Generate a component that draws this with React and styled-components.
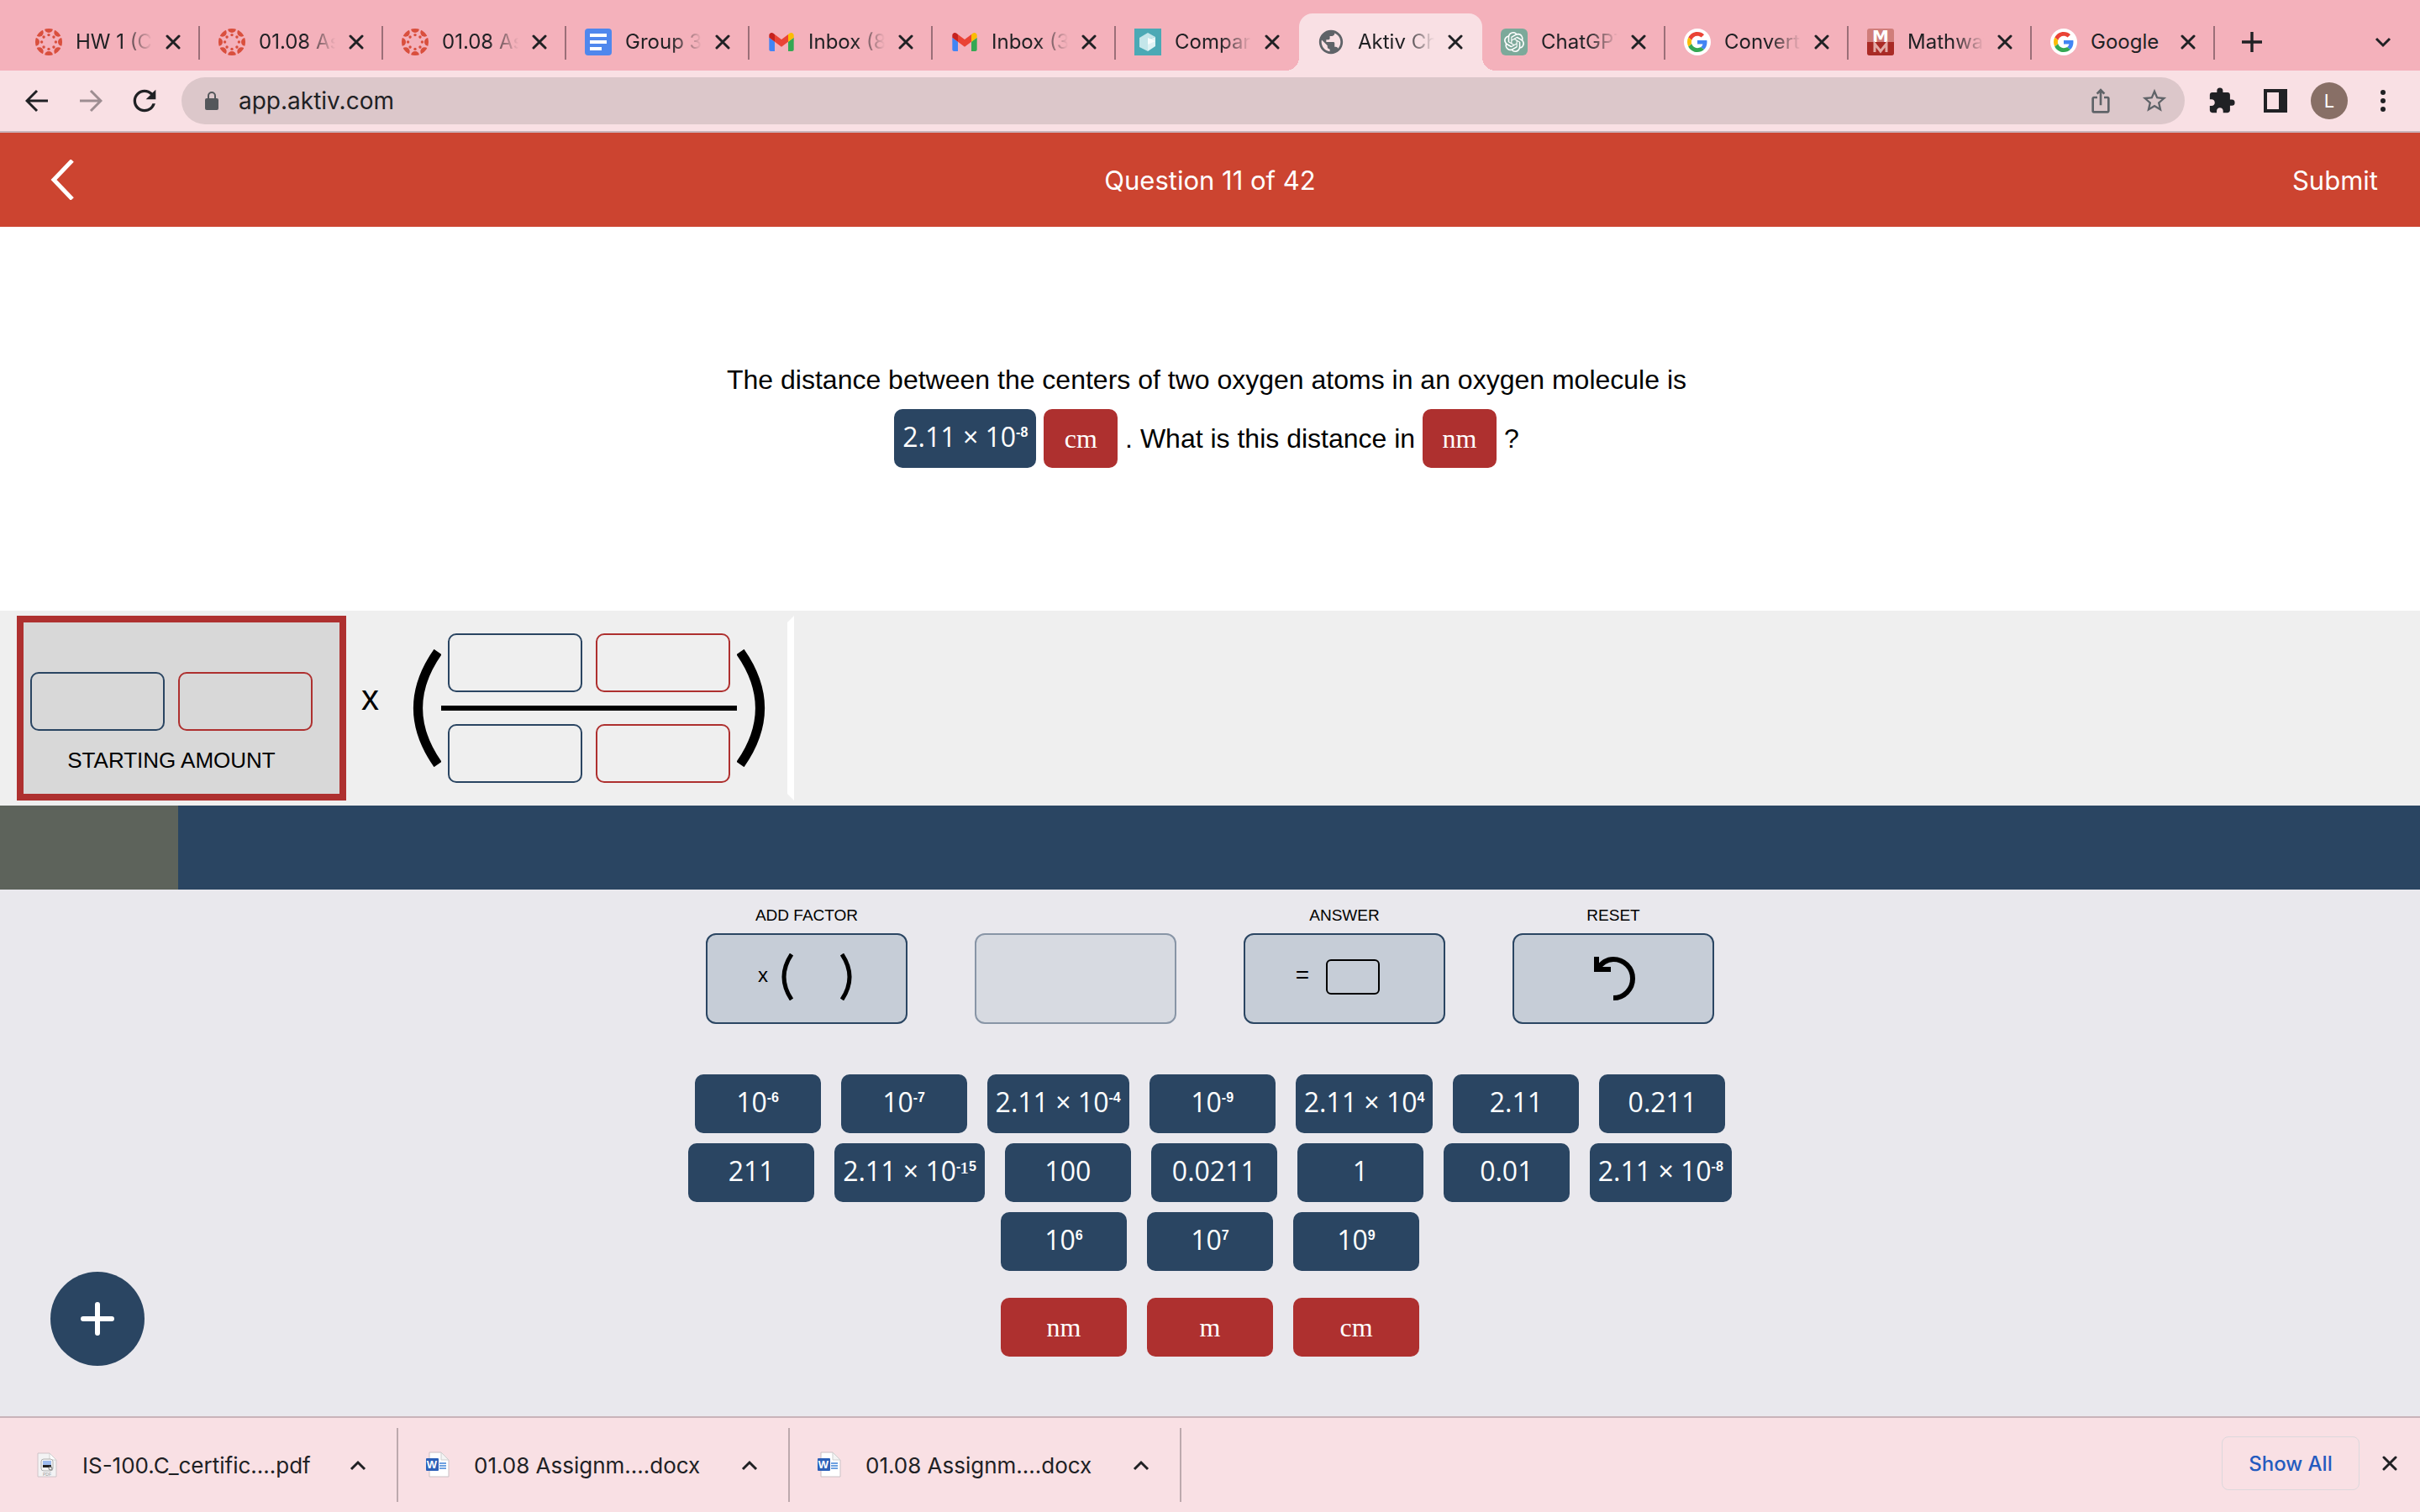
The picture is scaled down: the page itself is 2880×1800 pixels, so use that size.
import React from 'react';
import styled, { createGlobalStyle, css } from 'styled-components';
import { MdPublic, MdExtension, MdStarBorder, MdIosShare, MdRefresh } from 'react-icons/md';
import { SiOpenai } from 'react-icons/si';

const navy = '#2a4562';
const red = '#ae302f';
const brick = '#cc4430';
const ink = '#202124';
const pink = '#f4b1bb';
const palePink = '#f9e0e4';
const line = '#c9b3b9';

const uiFont = 'Inter, "Liberation Sans", sans-serif';
const sans = '"Liberation Sans", Arial, sans-serif';
const serif = '"Liberation Serif", "Times New Roman", serif';
const numberFont = '"Open Sans", "Noto Sans", sans-serif';

const GlobalStyle = createGlobalStyle`
  *, *::before, *::after {
    box-sizing: border-box;
  }

  body {
    margin: 0;
    font-family: ${sans};
    color: #000;
  }

  button {
    margin: 0;
    padding: 0;
    border: 0;
    background: none;
    color: inherit;
    font: inherit;
    cursor: pointer;
  }

  svg {
    display: block;
    flex: none;
  }
`;

const Page = styled.div`
  display: flex;
  flex-direction: column;
  min-height: 100vh;
`;

/* ---------- browser chrome ---------- */

const TabStrip = styled.div`
  display: flex;
  align-items: flex-end;
  height: 84px;
  padding: 0 24px 0 20px;
  background: ${pink};
  color: ${ink};
  font-family: ${uiFont};
`;

const curve = css`
  content: '';
  position: absolute;
  bottom: 0;
  width: 16px;
  height: 16px;
`;

const Tab = styled.div`
  position: relative;
  display: flex;
  align-items: center;
  gap: 16px;
  flex: 0 1 218px;
  min-width: 0;
  height: 68px;
  padding: 0 23px 0 22px;

  ${props => props.$divider && css`
    &::after {
      content: '';
      position: absolute;
      right: 0;
      top: 15px;
      width: 2px;
      height: 40px;
      background: #9b6f78;
    }
  `}

  ${props => props.$active && css`
    background: ${palePink};
    border-radius: 16px 16px 0 0;

    &::before {
      ${curve}
      left: -16px;
      background: radial-gradient(circle at 0 0, transparent 16px, ${palePink} 16px);
    }

    &::after {
      ${curve}
      right: -16px;
      background: radial-gradient(circle at 100% 0, transparent 16px, ${palePink} 16px);
    }
  `}
`;

const TabTitle = styled.span`
  flex: 1;
  min-width: 0;
  overflow: hidden;
  white-space: nowrap;
  font-size: 24px;
  line-height: 32px;
  ${props => props.$fade && css`
    mask-image: linear-gradient(to right, #000 60%, transparent 100%);
  `}
`;

const IconButton = styled.button`
  display: flex;
  align-items: center;
  justify-content: center;
  flex: none;
  width: 40px;
  height: 40px;
  color: ${props => props.$color || ink};
`;

const CloseButton = styled(IconButton)`
  width: 18px;
`;

const StripButton = styled(IconButton)`
  height: 68px;
  margin-left: ${props => (props.$end ? 'auto' : '24px')};
`;

const Toolbar = styled.div`
  display: flex;
  align-items: center;
  gap: 24px;
  height: 74px;
  padding: 0 24px;
  background: ${palePink};
  border-bottom: 2px solid ${line};
  font-family: ${uiFont};
`;

const AddressBar = styled.label`
  display: flex;
  align-items: center;
  gap: 24px;
  flex: 1;
  height: 56px;
  padding: 0 16px 0 28px;
  border-radius: 28px;
  background: #dcc7ca;
`;

const AddressInput = styled.input`
  flex: 1;
  min-width: 0;
  padding: 0;
  border: 0;
  outline: 0;
  background: none;
  color: ${ink};
  font-family: inherit;
  font-size: 28px;
`;

const Avatar = styled.button`
  width: 44px;
  height: 44px;
  margin: 0 -2px;
  border-radius: 50%;
  background: #886f66;
  color: #fff;
  font-size: 22px;
`;

/* ---------- assignment ---------- */

const Header = styled.header`
  display: grid;
  grid-template-columns: 1fr auto 1fr;
  align-items: center;
  height: 112px;
  padding: 0 50px;
  background: ${brick};
  color: #fff;
  font-family: ${uiFont};
  font-size: 31px;
`;

const BackButton = styled(IconButton)`
  width: 48px;
  height: 48px;
`;

const HeaderTitle = styled.h1`
  margin: 0;
  font-size: inherit;
  font-weight: 400;
`;

const SubmitButton = styled.button`
  justify-self: end;
`;

const Prompt = styled.section`
  padding: 147px 8px 170px 0;
  background: #fff;
`;

const PromptText = styled.p`
  max-width: 1200px;
  margin: 0 auto;
  font-size: 32px;
  line-height: 70px;
  text-align: center;
`;

const Tile = styled.button`
  display: inline-flex;
  align-items: center;
  justify-content: center;
  min-width: ${props => (props.$inline ? '88px' : '150px')};
  height: 70px;
  padding: ${props => (props.$unit ? '0 10px' : '0 10px 4px')};
  border-radius: 10px;
  background: ${props => (props.$unit ? red : navy)};
  color: #fff;
  font-family: ${props => (props.$unit ? serif : numberFont)};
  font-size: 32px;
  line-height: 44px;
  white-space: pre;
  vertical-align: top;
`;

const Exponent = styled.sup`
  font-family: ${sans};
  font-size: 16px;
  font-weight: 700;
  line-height: 0;
  vertical-align: 12px;
`;

const SmallOne = styled.span`
  font-family: ${serif};
`;

const Equation = styled.section`
  display: flex;
  padding: 6px 20px;
  background: #efefef;
`;

const StartBox = styled.div`
  height: 220px;
  padding: 59px 32px 0 8px;
  border: 8px solid ${red};
  background: #d8d8d8;
`;

const SlotRow = styled.div`
  display: flex;
  gap: 16px;
`;

const Slot = styled.button`
  width: 160px;
  height: 70px;
  border: 2px solid ${props => (props.$unit ? red : navy)};
  border-radius: 10px;
`;

const StartLabel = styled.div`
  margin-top: 20px;
  font-size: 26px;
  line-height: 30px;
  text-align: center;
`;

const FactorBox = styled.div`
  display: flex;
  align-items: center;
  height: 220px;
  padding: 0 26px 0 10px;
  border: 8px solid transparent;
  border-right-color: #fff;
`;

const Times = styled.span`
  margin-right: 40px;
  padding-bottom: 24px;
  font-size: 42px;
`;

const Fraction = styled.div`
  display: grid;
  gap: 16px;
`;

const FractionRow = styled(SlotRow)`
  padding: 0 8px;
`;

const FractionBar = styled.div`
  height: 6px;
  background: #000;
`;

const Progress = styled.div`
  height: 100px;
  background: ${navy};
`;

const ProgressFill = styled.div`
  width: 212px;
  height: 100%;
  background: #5d635b;
`;

const Workspace = styled.main`
  position: relative;
  display: flex;
  flex-direction: column;
  align-items: center;
  flex: 1;
  padding: 19px 24px 70px;
  background: #e9e8ed;
`;

const Actions = styled.div`
  display: flex;
  align-items: flex-end;
  gap: 80px;
`;

const Action = styled.div`
  display: flex;
  flex-direction: column;
  align-items: center;
  gap: 9px;
`;

const ActionLabel = styled.label`
  font-size: 19px;
  line-height: 24px;
`;

const ActionButton = styled.button`
  display: flex;
  align-items: center;
  justify-content: center;
  width: 240px;
  height: 108px;
  border: 2px solid ${navy};
  border-radius: 12px;
  background: #c6cdd7;

  &:disabled {
    opacity: 0.5;
  }
`;

const FactorButton = styled(ActionButton)`
  gap: 16px;
  padding: 0 4px 4px 0;
`;

const AnswerButton = styled(ActionButton)`
  gap: 20px;
  padding: 0 16px 4px 0;
`;

const ResetButton = styled(ActionButton)`
  padding-left: 4px;
`;

const Sign = styled.span`
  font-size: ${props => (props.$large ? '28px' : '24px')};
  padding-bottom: 4px;
`;

const AnswerBox = styled.span`
  width: 64px;
  height: 42px;
  border: 2px solid #000;
  border-radius: 6px;
`;

const TileBank = styled.div`
  display: flex;
  flex-wrap: wrap;
  justify-content: center;
  gap: 12px 24px;
  max-width: 1300px;
  margin-top: ${props => (props.$units ? '32px' : '60px')};
`;

const AddButton = styled.button`
  position: absolute;
  left: 60px;
  bottom: 60px;
  display: flex;
  align-items: center;
  justify-content: center;
  width: 112px;
  height: 112px;
  border-radius: 50%;
  background: ${navy};
`;

/* ---------- downloads ---------- */

const Downloads = styled.footer`
  display: flex;
  align-items: center;
  height: 114px;
  padding: 0 16px 0 8px;
  border-top: 2px solid ${line};
  background: ${palePink};
  color: ${ink};
  font-family: ${uiFont};
`;

const DownloadItem = styled.div`
  display: flex;
  align-items: center;
  gap: 26px;
  flex: 0 1 466px;
  height: 88px;
  padding: 0 26px 0 32px;
  border-right: 2px solid #bda9ad;
`;

const FileLink = styled.a`
  flex: 1;
  color: inherit;
  font-size: 26px;
  text-decoration: none;
  white-space: nowrap;
`;

const DownloadEnd = styled.div`
  display: flex;
  align-items: center;
  gap: 16px;
  margin-left: auto;
  padding-bottom: 4px;
`;

const ShowAll = styled.button`
  width: 164px;
  height: 64px;
  border: 1px solid #dcd8dc;
  border-radius: 8px;
  color: #245bbf;
  font-size: 24px;
  font-weight: 500;
`;

/* ---------- icons ---------- */

const RoundSvg = styled.svg`
  border-radius: 50%;
`;

const spokes = [0, 45, 90, 135, 180, 225, 270, 315];

const CanvasIcon = () => (
    <RoundSvg width="32" height="32" viewBox="0 0 32 32" fill="#d94f3d">
        {spokes.map(a => (
            <g key={a} transform={`rotate(${a} 16 16)`}>
                <circle cx="16" cy="0" r="5" />
                <circle cx="16" cy="7.6" r="1.7" />
            </g>
        ))}
    </RoundSvg>
);

const DocsIcon = () => (
    <svg width="32" height="32" viewBox="0 0 32 32">
        <rect width="32" height="32" rx="4" fill="#4f87ed" />
        <path d="M6 8h20M6 16h20M6 24h14" stroke="#fff" strokeWidth="4" />
    </svg>
);

const GmailIcon = () => (
    <svg width="32" height="22" viewBox="49 42 94 66">
        <path fill="#4285f4" d="M58 108h14V74L52 59v43c0 3.32 2.69 6 6 6" />
        <path fill="#34a853" d="M120 108h14c3.32 0 6-2.69 6-6V59l-20 15" />
        <path fill="#fbbc04" d="M120 48v26l20-15v-8c0-7.42-8.47-11.65-14.4-7.2" />
        <path fill="#ea4335" d="M72 74V48l24 18 24-18v26L96 92" />
        <path fill="#c5221f" d="M52 51v8l20 15V48l-5.6-4.2c-5.94-4.45-14.4-.22-14.4 7.2" />
    </svg>
);

const CrystalIcon = () => (
    <svg width="32" height="32" viewBox="0 0 32 32">
        <rect width="32" height="32" fill="#4ba9b5" />
        <path d="M16 5L6 11v11l10 5z" fill="#c4e6ea" />
        <path d="M16 5v8l9-3z" fill="#c4e6ea" />
        <path d="M16 13l9-3v11l-9 6z" fill="#dff2f4" />
        <path d="M16 11l9 4-9 4z" fill="#f7fcfc" />
    </svg>
);

const GlobeIcon = () => (
    <svg width="32" height="32" viewBox="0 0 32 32">
        <MdPublic x="-1" y="-1" size={34} color="#5f6368" />
    </svg>
);

const ChatIcon = () => (
    <svg width="32" height="32" viewBox="0 0 32 32">
        <rect width="32" height="32" rx="6" fill="#7ca99a" />
        <SiOpenai x="4" y="4" size={24} color="#fff" />
    </svg>
);

const GoogleIcon = () => (
    <svg width="32" height="32" viewBox="0 0 64 64">
        <circle cx="32" cy="32" r="32" fill="#fff" />
        <g transform="translate(8 8)">
            <path fill="#ea4335" d="M24 9.5c3.54 0 6.71 1.22 9.21 3.6l6.85-6.85C35.9 2.38 30.47 0 24 0 14.62 0 6.51 5.38 2.56 13.22l7.98 6.19C12.43 13.72 17.74 9.5 24 9.5z" />
            <path fill="#4285f4" d="M46.98 24.55c0-1.57-.15-3.09-.38-4.55H24v9.02h12.94c-.58 2.96-2.26 5.48-4.78 7.18l7.73 6c4.51-4.18 7.09-10.36 7.09-17.65z" />
            <path fill="#fbbc05" d="M10.53 28.59c-.48-1.45-.76-2.99-.76-4.59s.27-3.14.76-4.59l-7.98-6.19C.92 16.46 0 20.12 0 24s.92 7.54 2.56 10.78l7.97-6.19z" />
            <path fill="#34a853" d="M24 48c6.48 0 11.93-2.13 15.89-5.81l-7.73-6c-2.15 1.45-4.92 2.3-8.16 2.3-6.26 0-11.57-4.22-13.47-9.91l-7.98 6.19C6.51 42.62 14.62 48 24 48z" />
        </g>
    </svg>
);

const MathwayIcon = () => (
    <svg width="32" height="32" viewBox="0 0 32 32">
        <rect width="32" height="32" rx="3" fill="#d07d7a" />
        <path d="M0 16h32v13a3 3 0 0 1-3 3H3a3 3 0 0 1-3-3z" fill="#a92a25" />
        <text x="16" y="16" fontFamily="DejaVu Sans" fontWeight="700" fontSize="20" textAnchor="middle" fill="#fff">M</text>
        <polyline points="9,17 9,28 9,18 16,27 23,18 23,28" fill="none" stroke="#e3aaa6" strokeWidth="3" />
    </svg>
);

const CloseIcon = () => (
    <svg width="18" height="18" viewBox="0 0 18 18" stroke="currentColor" strokeWidth="3" strokeLinecap="round">
        <path d="M2 2l14 14M16 2L2 16" />
    </svg>
);

const PlusIcon = () => (
    <svg width="24" height="24" viewBox="0 0 24 24" stroke="currentColor" strokeWidth="3.4">
        <path d="M12 0v24M0 12h24" />
    </svg>
);

const ChevronIcon = ({up}) => (
    <svg width="20" height="14" viewBox="0 0 20 14" fill="none" stroke="currentColor" strokeWidth="3">
        <path d={up ? 'M2 12l8-8 8 8' : 'M2 3l8 8 8-8'} />
    </svg>
);

const ArrowIcon = ({forward}) => (
    <svg width="28" height="28" viewBox="0 0 28 28" fill="none" stroke="currentColor" strokeWidth="3">
        <path d={forward ? 'M1 14h24M14 2l12 12-12 12' : 'M27 14H3M14 2L2 14l12 12'} />
    </svg>
);

const LockIcon = () => (
    <svg width="16" height="22" viewBox="0 0 16 22">
        <rect y="8" width="16" height="14" rx="2" fill="#54575b" />
        <path d="M4 9V5a4 4 0 0 1 8 0V9" fill="none" stroke="#54575b" strokeWidth="2" />
    </svg>
);

const PanelIcon = () => (
    <svg width="28" height="28" viewBox="0 0 28 28">
        <path fillRule="evenodd" fill="currentColor" d="M0 0h28v28H0zM4 4v20h14V4z" />
    </svg>
);

const DotsIcon = () => (
    <svg width="8" height="28" viewBox="0 0 8 28" fill="currentColor">
        <circle cx="4" cy="4" r="3" />
        <circle cx="4" cy="14" r="3" />
        <circle cx="4" cy="24" r="3" />
    </svg>
);

const BackIcon = () => (
    <svg width="28" height="48" viewBox="0 0 28 48" fill="none" stroke="#fff" strokeWidth="5">
        <path d="M26 1L4 24l22 23" />
    </svg>
);

const ParenIcon = ({right}) => (
    <svg width="34" height="140" viewBox="0 0 34 140" fill="none" stroke="#000" strokeWidth="11">
        <path d={right ? 'M4 3Q51 70 4 137' : 'M30 3Q-17 70 30 137'} />
    </svg>
);

const ParensIcon = () => (
    <svg width="84" height="56" viewBox="0 0 84 56" fill="none" stroke="#000" strokeWidth="5">
        <path d="M12 1Q-6 28 12 55M72 1Q90 28 72 55" />
    </svg>
);

const ResetIcon = () => (
    <svg width="50" height="52" viewBox="0 0 50 52" fill="none" stroke="#000" strokeWidth="6">
        <path d="M3 0v15h17" />
        <path d="M4 15C9 7 15 3 23 3a23 23 0 0 1 0 46" />
    </svg>
);

const FabPlusIcon = () => (
    <svg width="40" height="40" viewBox="0 0 40 40" stroke="#fff" strokeWidth="6" strokeLinecap="round">
        <path d="M20 3v34M3 20h34" />
    </svg>
);

const PdfIcon = () => (
    <svg width="32" height="32" viewBox="0 0 32 32">
        <path d="M5 2h14l8 8v20H5z" fill="#f3f3f4" stroke="#d0c4c8" />
        <path d="M19 2v8h8z" fill="#fff" stroke="#d0d0d0" />
        <rect x="9" y="9" width="14" height="14" rx="3" fill="#f4f4f4" stroke="#b0b0b0" />
        <rect x="11" y="11" width="10" height="6" fill="#9dbbee" />
        <rect x="11" y="16" width="10" height="3" fill="#222" />
        <circle cx="20" cy="20" r="2" fill="none" stroke="#777" />
        <text x="16" y="29" fontFamily="Liberation Sans" fontSize="5" textAnchor="middle" fill="#999">PDF</text>
    </svg>
);

const WordIcon = () => (
    <svg width="32" height="32" viewBox="0 0 32 32">
        <path d="M5 1h14l9 9v20H5z" fill="#fff" stroke="#cbbfc4" />
        <path d="M19 1v9h9z" fill="#f4f4f4" stroke="#cfcfcf" />
        <path d="M17 14h8M17 17h8M17 20h8" stroke="#3f83d8" strokeWidth="1.3" />
        <rect x="1" y="8" width="15" height="15" rx="1" fill="#2c60b8" />
        <text x="8" y="20" fontFamily="Liberation Sans" fontWeight="700" fontSize="13" textAnchor="middle" fill="#fff">W</text>
    </svg>
);

/* ---------- data ---------- */

const tabs = [
    {title: 'HW 1 (C', icon: CanvasIcon},
    {title: '01.08 As', icon: CanvasIcon},
    {title: '01.08 As', icon: CanvasIcon},
    {title: 'Group 3', icon: DocsIcon},
    {title: 'Inbox (8', icon: GmailIcon},
    {title: 'Inbox (3', icon: GmailIcon},
    {title: 'Compar', icon: CrystalIcon},
    {title: 'Aktiv Ch', icon: GlobeIcon},
    {title: 'ChatGPT', icon: ChatIcon},
    {title: 'Convert', icon: GoogleIcon},
    {title: 'Mathway', icon: MathwayIcon},
    {title: 'Google', icon: GoogleIcon, whole: true},
];
const activeTab = 7;

const numbers = [
    ['10', '-6'], ['10', '-7'], ['2.11 × 10', '-4'], ['10', '-9'], ['2.11 × 10', '4'], ['2.11'], ['0.211'],
    ['211'], ['2.11 × 10', '-¹5'], ['100'], ['0.0211'], ['1'], ['0.01'], ['2.11 × 10', '-8'],
    ['10', '6'], ['10', '7'], ['10', '9'],
];

const units = ['nm', 'm', 'cm'];

const files = [
    {name: 'IS-100.C_certific....pdf', icon: PdfIcon},
    {name: '01.08 Assignm....docx', icon: WordIcon},
    {name: '01.08 Assignm....docx', icon: WordIcon},
];

function NumberTile({base, power, inline}) {
    const parts = power ? power.split(/(¹)/) : [];
    return (
        <Tile $inline={inline}>
            <span>
                {base}
                {parts.map((part, i) => (
                    part === '¹' ? <SmallOne key={i}>¹</SmallOne> : <Exponent key={i}>{part}</Exponent>
                ))}
            </span>
        </Tile>
    );
}

function Browser() {
    return (
        <>
            <TabStrip>
                {tabs.map(({title, icon: Icon, whole}, i) => (
                    <Tab key={i} $active={i === activeTab} $divider={i !== activeTab && i !== activeTab - 1}>
                        <Icon />
                        <TabTitle $fade={!whole}>{title}</TabTitle>
                        <CloseButton aria-label="Close tab"><CloseIcon /></CloseButton>
                    </Tab>
                ))}
                <StripButton aria-label="New tab"><PlusIcon /></StripButton>
                <StripButton $end aria-label="Search tabs"><ChevronIcon /></StripButton>
            </TabStrip>
            <Toolbar>
                <IconButton aria-label="Back"><ArrowIcon /></IconButton>
                <IconButton aria-label="Forward" $color="#9d8d91"><ArrowIcon forward /></IconButton>
                <IconButton aria-label="Reload"><MdRefresh size={40} /></IconButton>
                <AddressBar>
                    <LockIcon />
                    <AddressInput aria-label="Address" defaultValue="app.aktiv.com" />
                    <IconButton aria-label="Share" $color="#5f6368"><MdIosShare size={32} /></IconButton>
                    <IconButton aria-label="Bookmark" $color="#5f6368"><MdStarBorder size={34} /></IconButton>
                </AddressBar>
                <IconButton aria-label="Extensions"><MdExtension size={34} /></IconButton>
                <IconButton aria-label="Side panel"><PanelIcon /></IconButton>
                <Avatar>L</Avatar>
                <IconButton aria-label="Menu"><DotsIcon /></IconButton>
            </Toolbar>
        </>
    );
}

function EquationBar() {
    return (
        <Equation>
            <StartBox>
                <SlotRow>
                    <Slot aria-label="Starting value" />
                    <Slot $unit aria-label="Starting unit" />
                </SlotRow>
                <StartLabel>STARTING AMOUNT</StartLabel>
            </StartBox>
            <FactorBox>
                <Times>x</Times>
                <ParenIcon />
                <Fraction>
                    <FractionRow>
                        <Slot aria-label="Numerator value" />
                        <Slot $unit aria-label="Numerator unit" />
                    </FractionRow>
                    <FractionBar />
                    <FractionRow>
                        <Slot aria-label="Denominator value" />
                        <Slot $unit aria-label="Denominator unit" />
                    </FractionRow>
                </Fraction>
                <ParenIcon right />
            </FactorBox>
        </Equation>
    );
}

export default function App() {
    return (
        <Page>
            <GlobalStyle />
            <Browser />
            <Header>
                <BackButton $color="#fff" aria-label="Previous"><BackIcon /></BackButton>
                <HeaderTitle>Question 11 of 42</HeaderTitle>
                <SubmitButton>Submit</SubmitButton>
            </Header>
            <Prompt>
                <PromptText>
                    The distance between the centers of two oxygen atoms in an oxygen molecule is{' '}
                    <NumberTile inline base="2.11 × 10" power="-8" />{' '}
                    <Tile $inline $unit>cm</Tile>{' '}
                    . What is this distance in{' '}
                    <Tile $inline $unit>nm</Tile> ?
                </PromptText>
            </Prompt>
            <EquationBar />
            <Progress><ProgressFill /></Progress>
            <Workspace>
                <Actions>
                    <Action>
                        <ActionLabel htmlFor="add-factor">ADD FACTOR</ActionLabel>
                        <FactorButton id="add-factor">
                            <Sign>x</Sign>
                            <ParensIcon />
                        </FactorButton>
                    </Action>
                    <Action>
                        <ActionButton disabled aria-label="Unavailable" />
                    </Action>
                    <Action>
                        <ActionLabel htmlFor="answer">ANSWER</ActionLabel>
                        <AnswerButton id="answer">
                            <Sign $large>=</Sign>
                            <AnswerBox />
                        </AnswerButton>
                    </Action>
                    <Action>
                        <ActionLabel htmlFor="reset">RESET</ActionLabel>
                        <ResetButton id="reset"><ResetIcon /></ResetButton>
                    </Action>
                </Actions>
                <TileBank>
                    {numbers.map(([base, power], i) => <NumberTile key={i} base={base} power={power} />)}
                </TileBank>
                <TileBank $units>
                    {units.map(unit => <Tile key={unit} $unit>{unit}</Tile>)}
                </TileBank>
                <AddButton aria-label="Add"><FabPlusIcon /></AddButton>
            </Workspace>
            <Downloads>
                {files.map(({name, icon: Icon}, i) => (
                    <DownloadItem key={i}>
                        <Icon />
                        <FileLink href="#">{name}</FileLink>
                        <IconButton aria-label="File options"><ChevronIcon up /></IconButton>
                    </DownloadItem>
                ))}
                <DownloadEnd>
                    <ShowAll>Show All</ShowAll>
                    <IconButton aria-label="Close downloads"><CloseIcon /></IconButton>
                </DownloadEnd>
            </Downloads>
        </Page>
    );
}
